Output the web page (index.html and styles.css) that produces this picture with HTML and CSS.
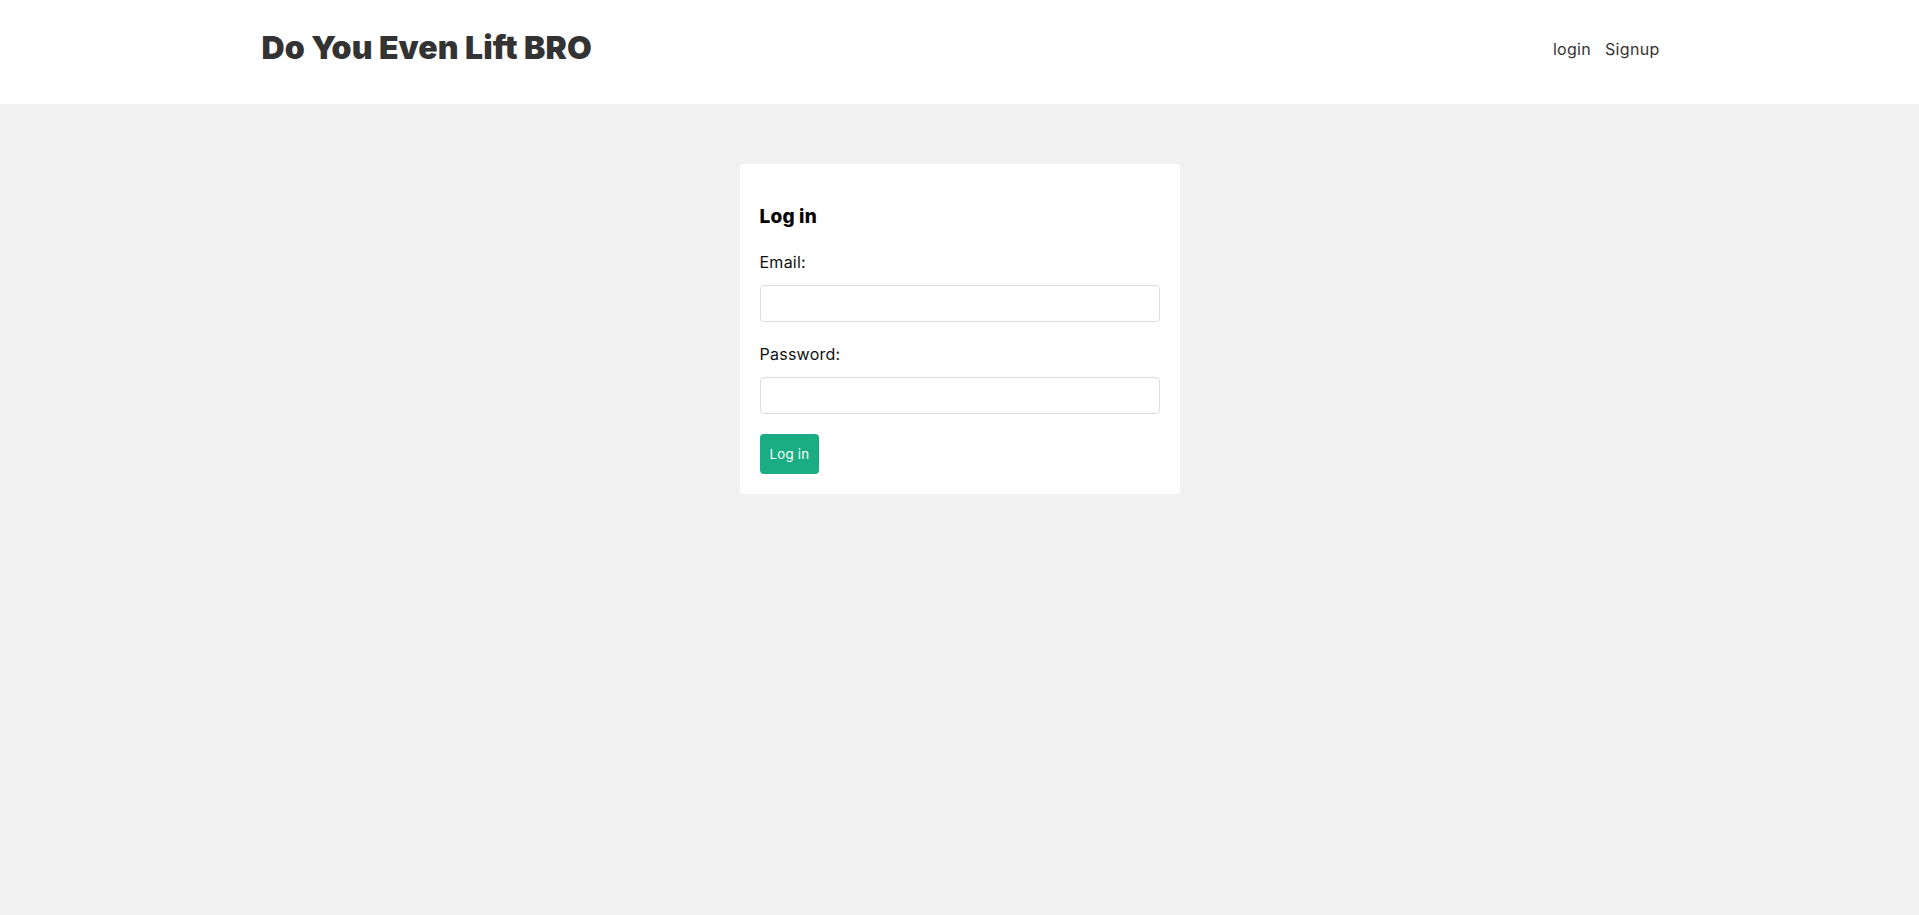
FILE: index.html
```html
<!DOCTYPE html>
<html lang="en">
<head>
<meta charset="utf-8">
<title>Do You Even Lift BRO</title>
<link rel="stylesheet" href="styles.css">
</head>
<body>
  <header class="site-header">
    <div class="container">
      <a class="logo" href="#">Do You Even Lift BRO</a>
      <nav class="nav">
        <a href="#">login</a>
        <a href="#">Signup</a>
      </nav>
    </div>
  </header>
  <div class="pages">
    <form class="login">
      <h3 class="form-title">Log in</h3>
      <label class="field-label">Email:</label>
      <input class="field-input" type="email">
      <label class="field-label">Password:</label>
      <input class="field-input" type="password">
      <button class="submit-btn" type="button">Log in</button>
    </form>
  </div>
</body>
</html>
```

FILE: styles.css
```css
body {
  margin: 0;
  background: #f1f1f1;
  font-family: "Inter", "Open Sans", sans-serif;
  color: #000;
}

.site-header {
  background: #fff;
}

.site-header .container {
  max-width: 1400px;
  height: 104px;
  margin: 0 auto;
  display: flex;
  align-items: center;
  justify-content: space-between;
}

.logo {
  color: #333;
  text-decoration: none;
  font-size: 32px;
  font-weight: 900;
  line-height: 48px;
  margin-top: -8px;
  margin-left: 2px;
  letter-spacing: 0.05px;
}

.nav {
  display: flex;
  align-items: center;
  margin-top: -7px;
}

.nav a {
  color: #333;
  text-decoration: none;
  font-size: 16px;
  letter-spacing: 0.3px;
  margin-left: 14px;
}

.pages {
  max-width: 1400px;
  padding: 20px;
  margin: 0 auto;
}

.login {
  max-width: 400px;
  margin: 40px auto;
  padding: 20px;
  background: #fff;
  border-radius: 4px;
}

.form-title {
  margin: 19px 0;
  font-size: 19px;
  line-height: 28px;
  font-weight: 800;
  letter-spacing: 0.2px;
}

.field-label {
  display: block;
  font-size: 16px;
  letter-spacing: 0.25px;
  line-height: 24px;
  color: #111;
}

.field-input {
  display: block;
  box-sizing: border-box;
  width: 100%;
  height: 37px;
  margin: 11px 0 20px;
  padding: 10px;
  border: 1px solid #ddd;
  border-radius: 4px;
  font-family: inherit;
}

.submit-btn {
  display: block;
  height: 40px;
  margin-top: 1px;
  padding: 0 10px;
  border: 0;
  border-radius: 4px;
  background: #1aac83;
  color: #fff;
  font-family: inherit;
  font-size: 13.33px;
  letter-spacing: 0.2px;
  cursor: pointer;
}
```
